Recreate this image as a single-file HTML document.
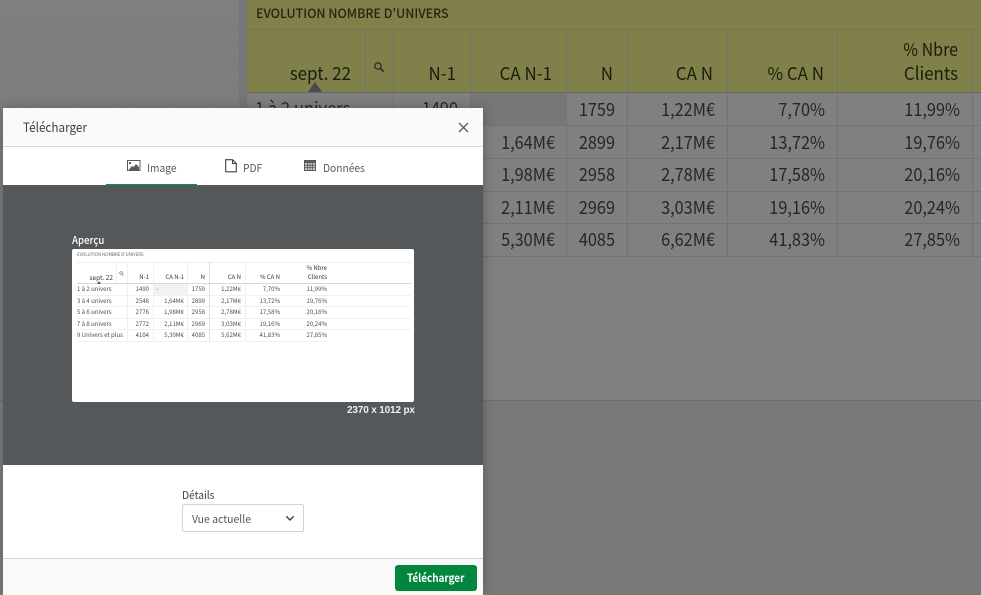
<!DOCTYPE html>
<html lang="fr"><head><meta charset="utf-8"><title>Télécharger</title>
<style>
html,body{margin:0;padding:0;width:981px;height:595px;overflow:hidden;background:#7f7f7f}
body{position:relative;font-family:"Noto Sans CJK JP","Liberation Sans",sans-serif;color:#222}
div,span,svg,b{position:absolute;display:block}
.t{white-space:nowrap;line-height:20px;font-size:18px;color:#2a2a2a;transform-origin:0 50%}
.r{white-space:nowrap;line-height:20px;font-size:18px;color:#262626;transform-origin:100% 50%;transform:translateX(-100%) scaleX(.905)}
.h{color:#1c1c0c;transform:translateX(-100%) scaleX(.94)}
.tab{font-size:11px;color:#595959;transform:scaleX(.93)}
.vl{width:1px;background:#737373}
.hl{height:1px;background:#737373;left:247px;width:734px}
.m{white-space:nowrap;line-height:8px;font-size:6px;color:#4d4d4d;transform:translateX(-100%);filter:blur(.25px)}
.ml{white-space:nowrap;line-height:8px;font-size:6px;color:#4d4d4d;filter:blur(.25px)}
.mv{width:1px;background:#f0f0f0}
.mh{height:1px;background:#f0f0f0;left:77px;width:334px}
</style></head><body>
<div style="left:0;top:0;width:239px;height:18px;background:#7f7f7f"></div>
<div style="left:0;top:18px;width:239px;height:577px;background:repeating-linear-gradient(135deg,#7c7c7c 0 2px,#7f7f7f 2px 4px)"></div>
<div style="left:239px;top:0;width:8px;height:400px;background:#767676"></div>
<div style="left:247px;top:92px;width:734px;height:308px;background:#808080"></div>
<div style="left:0;top:400px;width:981px;height:1px;background:#6e6e6e"></div>
<div style="left:239px;top:401px;width:742px;height:194px;background:#797979"></div>
<div style="left:247px;top:0;width:734px;height:92px;background:#80804a"></div>
<div style="left:247px;top:29px;width:734px;height:1px;background:#76764c"></div>
<div style="left:247px;top:92px;width:734px;height:1px;background:#666"></div>
<div class="t" style="left:256px;top:3px;font-size:13px;font-weight:500;color:#24240f;transform:scaleX(.955)">EVOLUTION NOMBRE D'UNIVERS</div>

<div class="vl" style="left:365px;top:30px;height:62px"></div>
<div class="vl" style="left:393px;top:30px;height:226px"></div>
<div class="vl" style="left:470px;top:30px;height:226px"></div>
<div class="vl" style="left:566px;top:30px;height:226px"></div>
<div class="vl" style="left:627px;top:30px;height:226px"></div>
<div class="vl" style="left:727px;top:30px;height:226px"></div>
<div class="vl" style="left:837px;top:30px;height:226px"></div>
<div class="vl" style="left:972px;top:30px;height:226px"></div>
<div style="left:471px;top:93px;width:95px;height:32px;background:#777"></div>
<div class="hl" style="top:125px"></div><div class="hl" style="top:158px"></div><div class="hl" style="top:191px"></div><div class="hl" style="top:223px"></div><div class="hl" style="top:256px"></div>

<span class="r h" style="left:351px;top:63px">sept. 22</span>
<div style="left:308px;top:82px;width:0;height:0;border-left:7px solid transparent;border-right:7px solid transparent;border-bottom:10px solid #4a4a4a"></div>
<svg style="left:373px;top:61px" width="12" height="12" viewBox="0 0 12 12"><circle cx="5" cy="5" r="3.2" fill="none" stroke="#222" stroke-width="1.2"/><path d="M7.4 7.4L10.6 10.6" stroke="#222" stroke-width="1.5"/></svg>
<span class="r h" style="left:456px;top:63px">N-1</span>
<span class="r h" style="left:552px;top:63px">CA N-1</span>
<span class="r h" style="left:613px;top:63px">N</span>
<span class="r h" style="left:713px;top:63px">CA N</span>
<span class="r h" style="left:824px;top:63px">% CA N</span>
<span class="r h" style="left:958px;top:39px;transform:translateX(-100%) scaleX(.89)">% Nbre</span>
<span class="r h" style="left:958px;top:63px">Clients</span>

<span class="t" style="left:255px;top:98px;transform:scaleX(.92)">1 à 2 univers</span>
<span class="r" style="left:458px;top:98px">1490</span>
<span class="r" style="left:615px;top:99px">1759</span><span class="r" style="left:715px;top:99px">1,22M€</span><span class="r" style="left:825px;top:99px">7,70%</span><span class="r" style="left:960px;top:99px">11,99%</span>
<span class="r" style="left:555px;top:132px">1,64M€</span><span class="r" style="left:615px;top:132px">2899</span><span class="r" style="left:715px;top:132px">2,17M€</span><span class="r" style="left:825px;top:132px">13,72%</span><span class="r" style="left:960px;top:132px">19,76%</span>
<span class="r" style="left:555px;top:164px">1,98M€</span><span class="r" style="left:615px;top:164px">2958</span><span class="r" style="left:715px;top:164px">2,78M€</span><span class="r" style="left:825px;top:164px">17,58%</span><span class="r" style="left:960px;top:164px">20,16%</span>
<span class="r" style="left:555px;top:197px">2,11M€</span><span class="r" style="left:615px;top:197px">2969</span><span class="r" style="left:715px;top:197px">3,03M€</span><span class="r" style="left:825px;top:197px">19,16%</span><span class="r" style="left:960px;top:197px">20,24%</span>
<span class="r" style="left:555px;top:229px">5,30M€</span><span class="r" style="left:615px;top:229px">4085</span><span class="r" style="left:715px;top:229px">6,62M€</span><span class="r" style="left:825px;top:229px">41,83%</span><span class="r" style="left:960px;top:229px">27,85%</span>

<!-- modal -->
<div style="left:3px;top:108px;width:480px;height:487px;background:#fff;box-shadow:0 0 12px rgba(0,0,0,.25)"></div>
<div style="left:3px;top:108px;width:480px;height:38px;background:#fafafa;border-bottom:1px solid #d6d6d6"></div>
<span class="t" style="left:23px;top:117px;font-size:13px;color:#404040;transform:scaleX(.9)">Télécharger</span>
<svg style="left:458px;top:122px" width="11" height="11" viewBox="0 0 11 11"><path d="M1 1L10 10M10 1L1 10" stroke="#595959" stroke-width="1.3" fill="none"/></svg>

<svg style="left:127px;top:160px" width="14" height="12" viewBox="0 0 14 12"><rect x=".5" y=".5" width="12.5" height="10" fill="none" stroke="#595959"/><path d="M2 9.5L5 6l1.5 1L9 4l3 3v3H2z" fill="#595959"/><rect x="2" y="2" width="2" height="2" fill="#595959"/></svg>
<span class="t tab" style="left:147px;top:158px">Image</span>
<svg style="left:225px;top:159px" width="12" height="14" viewBox="0 0 12 14"><path d="M.7.7H7.5L11.3 4.5V12.8H.7zM7.5.7V4.5H11.3" fill="none" stroke="#404040" stroke-width="1.1"/></svg>
<span class="t tab" style="left:243px;top:158px">PDF</span>
<svg style="left:304px;top:160px" width="12" height="12" viewBox="0 0 12 12"><rect width="12" height="11" fill="#595959"/><path d="M1 3h10v7H1z" fill="#ccc"/><path d="M3.5 3v7M6 3v7M8.5 3v7M1 5.3h10M1 7.6h10" stroke="#595959" stroke-width=".8"/></svg>
<span class="t tab" style="left:323px;top:158px">Données</span>
<div style="left:106px;top:184px;width:91px;height:2px;background:#009845"></div>

<div style="left:3px;top:185px;width:480px;height:280px;background:#54585b"></div>
<span class="t" style="left:72px;top:231px;font-size:10.5px;color:#fff;font-weight:500;transform:scaleX(.92)">Aperçu</span>
<div style="left:72px;top:249px;width:342px;height:153px;background:#fff;border-radius:2px"></div>
<span class="t" style="left:347px;top:401px;font:bold 10px/20px 'Liberation Sans',sans-serif;color:#eee;letter-spacing:-.16px">2370 x 1012 px</span>

<div style="left:77px;top:262px;width:334px;height:1px;background:#eee"></div>
<span class="ml" style="left:77px;top:251px;font-size:4.4px;color:#666">EVOLUTION NOMBRE D'UNIVERS</span>
<div class="mv" style="left:116px;top:262px;height:21px"></div><div class="mv" style="left:127px;top:262px;height:79px"></div><div class="mv" style="left:153px;top:262px;height:79px"></div><div class="mv" style="left:187px;top:262px;height:79px"></div><div class="mv" style="left:209px;top:262px;height:79px;background:#ddd"></div><div class="mv" style="left:245px;top:262px;height:79px"></div>
<div style="left:154px;top:284px;width:33px;height:11px;background:#f2f2f2"></div>
<div class="mh" style="top:283px;background:#d8d8d8"></div><div class="mh" style="top:295px"></div><div class="mh" style="top:306px"></div><div class="mh" style="top:318px"></div><div class="mh" style="top:329px"></div><div class="mh" style="top:341px;width:250px"></div>
<span class="m" style="left:113px;top:273px;color:#333;font-size:6.5px">sept. 22</span>
<div style="left:97px;top:281px;width:0;height:0;border-left:2px solid transparent;border-right:2px solid transparent;border-bottom:3px solid #555"></div>
<svg style="left:119px;top:271px" width="5" height="5" viewBox="0 0 5 5"><circle cx="2" cy="2" r="1.3" fill="none" stroke="#666" stroke-width=".6"/><path d="M3 3L4.5 4.5" stroke="#666" stroke-width=".6"/></svg>
<span class="m" style="left:149px;top:273px;color:#333">N-1</span><span class="m" style="left:184px;top:273px;color:#333">CA N-1</span><span class="m" style="left:205px;top:273px;color:#333">N</span><span class="m" style="left:241px;top:273px;color:#333">CA N</span><span class="m" style="left:280px;top:273px;color:#333">% CA N</span><span class="m" style="left:327px;top:264px;color:#333">% Nbre</span><span class="m" style="left:327px;top:273px;color:#333">Clients</span>

<span class="ml" style="left:77px;top:285px">1 à 2 univers</span><span class="m" style="left:149px;top:285px">1490</span><span class="ml" style="left:156px;top:285px">-</span><span class="m" style="left:205px;top:285px">1759</span><span class="m" style="left:241px;top:285px">1,22M€</span><span class="m" style="left:280px;top:285px">7,70%</span><span class="m" style="left:327px;top:285px">11,99%</span>
<span class="ml" style="left:77px;top:297px">3 à 4 univers</span><span class="m" style="left:149px;top:297px">2548</span><span class="m" style="left:184px;top:297px">1,64M€</span><span class="m" style="left:205px;top:297px">2899</span><span class="m" style="left:241px;top:297px">2,17M€</span><span class="m" style="left:280px;top:297px">13,72%</span><span class="m" style="left:327px;top:297px">19,76%</span>
<span class="ml" style="left:77px;top:308px">5 à 6 univers</span><span class="m" style="left:149px;top:308px">2776</span><span class="m" style="left:184px;top:308px">1,98M€</span><span class="m" style="left:205px;top:308px">2958</span><span class="m" style="left:241px;top:308px">2,78M€</span><span class="m" style="left:280px;top:308px">17,58%</span><span class="m" style="left:327px;top:308px">20,16%</span>
<span class="ml" style="left:77px;top:320px">7 à 8 univers</span><span class="m" style="left:149px;top:320px">2772</span><span class="m" style="left:184px;top:320px">2,11M€</span><span class="m" style="left:205px;top:320px">2969</span><span class="m" style="left:241px;top:320px">3,03M€</span><span class="m" style="left:280px;top:320px">19,16%</span><span class="m" style="left:327px;top:320px">20,24%</span>
<span class="ml" style="left:77px;top:331px">9 Univers et plus</span><span class="m" style="left:149px;top:331px">4104</span><span class="m" style="left:184px;top:331px">5,30M€</span><span class="m" style="left:205px;top:331px">4085</span><span class="m" style="left:241px;top:331px">5,62M€</span><span class="m" style="left:280px;top:331px">41,83%</span><span class="m" style="left:327px;top:331px">27,85%</span>

<span class="t" style="left:182px;top:485px;font-size:11px;color:#404040;transform:scaleX(.93)">Détails</span>
<div style="left:182px;top:504px;width:120px;height:26px;border:1px solid #d4d4d4;border-radius:2px;background:#fff"></div>
<span class="t" style="left:192px;top:509px;font-size:11px;color:#555;transform:scaleX(.95)">Vue actuelle</span>
<svg style="left:285px;top:515px" width="10" height="7" viewBox="0 0 10 7"><path d="M1.3 1.3L5 5l3.7-3.7" fill="none" stroke="#404040" stroke-width="1.4"/></svg>
<div style="left:3px;top:558px;width:480px;height:37px;background:#f9f9f9;border-top:1px solid #d6d6d6;box-sizing:border-box"></div>
<div style="left:395px;top:565px;width:82px;height:26px;background:#00873d;border-radius:3px"></div>
<span class="t" style="left:407px;top:568px;font-size:11px;font-weight:700;color:#fff;transform:scaleX(.9)">Télécharger</span>
</body></html>
